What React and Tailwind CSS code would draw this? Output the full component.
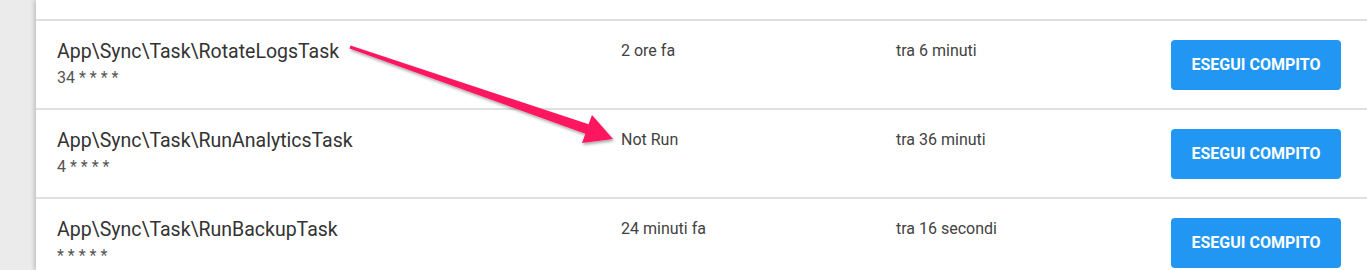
import React from "react";

const rows = [
  { name: "App\\Sync\\Task\\RotateLogsTask", cron: "34 * * * *", last: "2 ore fa", next: "tra 6 minuti" },
  { name: "App\\Sync\\Task\\RunAnalyticsTask", cron: "4 * * * *", last: "Not Run", next: "tra 36 minuti" },
  { name: "App\\Sync\\Task\\RunBackupTask", cron: "* * * * *", last: "24 minuti fa", next: "tra 16 secondi" },
];

function Row({ r }) {
  return (
    <div className="grid grid-cols-[564px_275px_275px_170px] h-[89px] border-t-2 border-[#e0e0e0] pl-[21px] pr-[26px]">
      <div className="pt-[17px]">
        <div className="text-[19.5px] leading-[28px] text-[#333333]">{r.name}</div>
        <div className="mt-[2px] text-[16px] leading-[20px] text-[#555555]">{r.cron}</div>
      </div>
      <div className="pt-[20px] text-[16px] leading-[20px] text-[#424242]">{r.last}</div>
      <div className="pt-[20px] text-[16px] leading-[20px] text-[#424242]">{r.next}</div>
      <div className="self-center">
        <button className="w-[170px] h-[50px] rounded-[4px] bg-[#2196f3] text-white text-[16px] font-bold uppercase">
          Esegui compito
        </button>
      </div>
    </div>
  );
}

export default function App() {
  return (
    <div
      className="relative flex h-[270px] w-[1367px] overflow-hidden bg-[#ebebeb]"
      style={{ fontFamily: "Roboto, 'Noto Sans', sans-serif" }}
    >
      <div className="w-[36px] shrink-0" />
      <div className="flex-1 bg-white shadow-[-2px_0_4px_rgba(0,0,0,0.18)]">
        <div className="h-[19px]" />
        {rows.map((r) => (
          <Row key={r.name} r={r} />
        ))}
      </div>
      <svg className="absolute left-0 top-0 pointer-events-none" width="1367" height="270">
        <defs>
          <filter id="sh" x="-10%" y="-10%" width="130%" height="140%">
            <feDropShadow dx="1" dy="2" stdDeviation="1.5" floodColor="#000" floodOpacity="0.35" />
          </filter>
        </defs>
        <polygon
          filter="url(#sh)"
          fill="#ff1660"
          points="350.5,45.6 588.6,124.3 592,115 613,139 582,143 585.4,133.7 349.5,48.4"
        />
      </svg>
    </div>
  );
}
